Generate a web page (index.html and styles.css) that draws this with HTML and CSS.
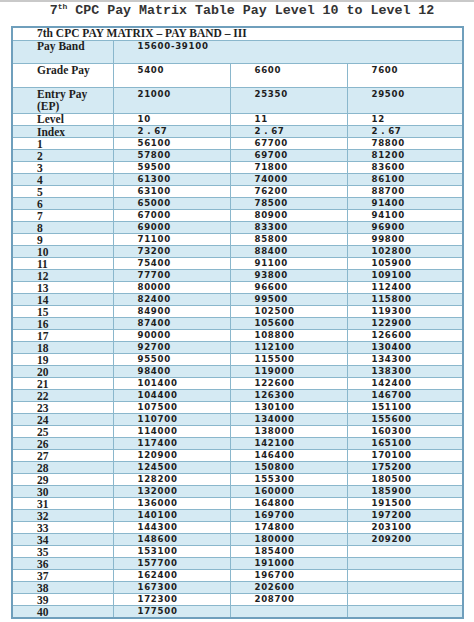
FILE: index.html
```html
<!DOCTYPE html>
<html>
<head>
<meta charset="utf-8">
<link rel="stylesheet" href="styles.css">
</head>
<body>
<div class="topbar"></div>
<h1 class="title">7<sup>th</sup> CPC Pay Matrix Table Pay Level 10 to Level 12</h1>
<table class="matrix">
<colgroup><col class="c1"><col class="c2"><col class="c3"><col class="c4"></colgroup>
<tbody>
<tr class="w h-head"><td class="lbl" colspan="4">7th CPC PAY MATRIX – PAY BAND – III</td></tr>
<tr class="b h-band"><td class="lbl">Pay Band</td><td class="num" colspan="3">15600-39100</td></tr>
<tr class="w h-grade"><td class="lbl">Grade Pay</td><td class="num">5400</td><td class="num">6600</td><td class="num">7600</td></tr>
<tr class="b h-entry"><td class="lbl">Entry Pay<br>(EP)</td><td class="num">21000</td><td class="num">25350</td><td class="num">29500</td></tr>
<tr class="w h-lvl"><td class="lbl">Level</td><td class="num">10</td><td class="num">11</td><td class="num">12</td></tr>
<tr class="b"><td class="lbl">Index</td><td class="num">2<span class="dot">.</span>67</td><td class="num">2<span class="dot">.</span>67</td><td class="num">2<span class="dot">.</span>67</td></tr>
<tr class="w"><td class="lbl">1</td><td class="num">56100</td><td class="num">67700</td><td class="num">78800</td></tr>
<tr class="b"><td class="lbl">2</td><td class="num">57800</td><td class="num">69700</td><td class="num">81200</td></tr>
<tr class="w"><td class="lbl">3</td><td class="num">59500</td><td class="num">71800</td><td class="num">83600</td></tr>
<tr class="b"><td class="lbl">4</td><td class="num">61300</td><td class="num">74000</td><td class="num">86100</td></tr>
<tr class="w"><td class="lbl">5</td><td class="num">63100</td><td class="num">76200</td><td class="num">88700</td></tr>
<tr class="b"><td class="lbl">6</td><td class="num">65000</td><td class="num">78500</td><td class="num">91400</td></tr>
<tr class="w"><td class="lbl">7</td><td class="num">67000</td><td class="num">80900</td><td class="num">94100</td></tr>
<tr class="b"><td class="lbl">8</td><td class="num">69000</td><td class="num">83300</td><td class="num">96900</td></tr>
<tr class="w"><td class="lbl">9</td><td class="num">71100</td><td class="num">85800</td><td class="num">99800</td></tr>
<tr class="b"><td class="lbl">10</td><td class="num">73200</td><td class="num">88400</td><td class="num">102800</td></tr>
<tr class="w"><td class="lbl">11</td><td class="num">75400</td><td class="num">91100</td><td class="num">105900</td></tr>
<tr class="b"><td class="lbl">12</td><td class="num">77700</td><td class="num">93800</td><td class="num">109100</td></tr>
<tr class="w"><td class="lbl">13</td><td class="num">80000</td><td class="num">96600</td><td class="num">112400</td></tr>
<tr class="b"><td class="lbl">14</td><td class="num">82400</td><td class="num">99500</td><td class="num">115800</td></tr>
<tr class="w"><td class="lbl">15</td><td class="num">84900</td><td class="num">102500</td><td class="num">119300</td></tr>
<tr class="b"><td class="lbl">16</td><td class="num">87400</td><td class="num">105600</td><td class="num">122900</td></tr>
<tr class="w"><td class="lbl">17</td><td class="num">90000</td><td class="num">108800</td><td class="num">126600</td></tr>
<tr class="b"><td class="lbl">18</td><td class="num">92700</td><td class="num">112100</td><td class="num">130400</td></tr>
<tr class="w"><td class="lbl">19</td><td class="num">95500</td><td class="num">115500</td><td class="num">134300</td></tr>
<tr class="b"><td class="lbl">20</td><td class="num">98400</td><td class="num">119000</td><td class="num">138300</td></tr>
<tr class="w"><td class="lbl">21</td><td class="num">101400</td><td class="num">122600</td><td class="num">142400</td></tr>
<tr class="b"><td class="lbl">22</td><td class="num">104400</td><td class="num">126300</td><td class="num">146700</td></tr>
<tr class="w"><td class="lbl">23</td><td class="num">107500</td><td class="num">130100</td><td class="num">151100</td></tr>
<tr class="b"><td class="lbl">24</td><td class="num">110700</td><td class="num">134000</td><td class="num">155600</td></tr>
<tr class="w"><td class="lbl">25</td><td class="num">114000</td><td class="num">138000</td><td class="num">160300</td></tr>
<tr class="b"><td class="lbl">26</td><td class="num">117400</td><td class="num">142100</td><td class="num">165100</td></tr>
<tr class="w"><td class="lbl">27</td><td class="num">120900</td><td class="num">146400</td><td class="num">170100</td></tr>
<tr class="b"><td class="lbl">28</td><td class="num">124500</td><td class="num">150800</td><td class="num">175200</td></tr>
<tr class="w"><td class="lbl">29</td><td class="num">128200</td><td class="num">155300</td><td class="num">180500</td></tr>
<tr class="b"><td class="lbl">30</td><td class="num">132000</td><td class="num">160000</td><td class="num">185900</td></tr>
<tr class="w"><td class="lbl">31</td><td class="num">136000</td><td class="num">164800</td><td class="num">191500</td></tr>
<tr class="b"><td class="lbl">32</td><td class="num">140100</td><td class="num">169700</td><td class="num">197200</td></tr>
<tr class="w"><td class="lbl">33</td><td class="num">144300</td><td class="num">174800</td><td class="num">203100</td></tr>
<tr class="b"><td class="lbl">34</td><td class="num">148600</td><td class="num">180000</td><td class="num">209200</td></tr>
<tr class="w"><td class="lbl">35</td><td class="num">153100</td><td class="num">185400</td><td class="num"></td></tr>
<tr class="b"><td class="lbl">36</td><td class="num">157700</td><td class="num">191000</td><td class="num"></td></tr>
<tr class="w"><td class="lbl">37</td><td class="num">162400</td><td class="num">196700</td><td class="num"></td></tr>
<tr class="b"><td class="lbl">38</td><td class="num">167300</td><td class="num">202600</td><td class="num"></td></tr>
<tr class="w"><td class="lbl">39</td><td class="num">172300</td><td class="num">208700</td><td class="num"></td></tr>
<tr class="b"><td class="lbl">40</td><td class="num">177500</td><td class="num"></td><td class="num"></td></tr>
</tbody>
</table>
</body>
</html>
```

FILE: styles.css
```css
html, body {
  margin: 0;
  padding: 0;
  background: #ffffff;
}
.topbar {
  height: 2px;
  background: #c9c9c9;
}
.title {
  margin: 0;
  height: 24px;
  padding-left: 10px;
  box-sizing: border-box;
  text-align: center;
  font-family: "Liberation Mono", "DejaVu Sans Mono", monospace;
  font-weight: bold;
  font-size: 13.3px;
  line-height: 17px;
  color: #333333;
}
.title sup {
  font-size: 8px;
  line-height: 0;
  vertical-align: 5px;
}
.matrix {
  margin-left: 11px;
  width: 451px;
  table-layout: fixed;
  border-collapse: collapse;
  border: 2px solid #6f9fbc;
}
.c1 { width: 101px; }
.c2 { width: 117px; }
.c3 { width: 117px; }
.c4 { width: 116px; }
.matrix td {
  border: 1px solid #8ab7cc;
  padding: 0 0 0 24px;
  height: 11px;
  line-height: 11px;
  vertical-align: top;
  color: #1e1e1e;
  white-space: nowrap;
  overflow: hidden;
}
.matrix tr.b td { background: #d5eaf3; }
.matrix tr.w td { background: #ffffff; }
.lbl {
  font-family: "Liberation Serif", "DejaVu Serif", serif;
  font-weight: bold;
  font-size: 11.5px;
}
.matrix td.lbl {
  line-height: 10px;
  padding-top: 1px;
  height: 10px;
}
.num {
  font-family: "DejaVu Sans", Verdana, sans-serif;
  font-weight: bold;
  font-size: 8.6px;
  letter-spacing: 0.7px;
}
.dot {
  padding: 0 3px;
}
.matrix tr.h-head td { height: 12px; line-height: 11px; padding-top: 0; }
.matrix tr.h-band td { height: 22px; line-height: 11px; padding-top: 0; }
.matrix tr.h-grade td { height: 23px; line-height: 12px; padding-top: 0; }
.matrix tr.h-entry td { height: 25px; line-height: 12px; padding-top: 0; }
.matrix tr.h-lvl td { height: 10px; }
.matrix tr.h-lvl td.lbl { height: 9px; line-height: 9px; padding-top: 1px; }
```
